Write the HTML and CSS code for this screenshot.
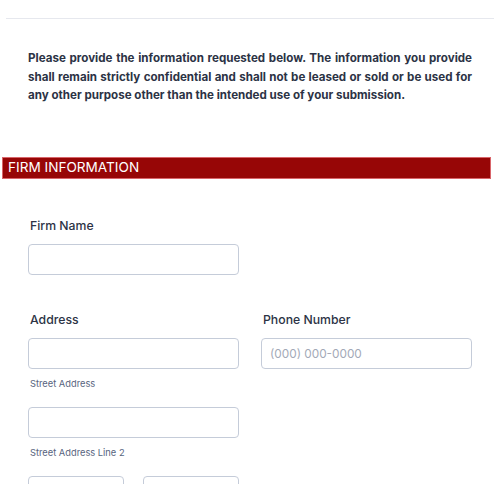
FILE: index.html
```html
<!DOCTYPE html>
<html lang="en">

<head>
    <meta charset="UTF-8">
    <meta name="viewport" content="width=device-width, initial-scale=1.0">
    <title>Firm Information</title>
    <link rel="stylesheet" href="styles.css">
</head>

<body>

    <div class="divider"></div>

    <p class="intro">Please provide the information requested below. The information you provide
        shall remain strictly confidential and shall not be leased or sold or be used for
        any other purpose other than the intended use of your submission.</p>

    <div class="section-head">FIRM INFORMATION</div>

    <div class="form-line first">
        <div class="field">
            <label class="label" for="firmName">Firm Name</label>
            <input class="input" id="firmName" type="text">
        </div>
    </div>

    <div class="form-line">
        <div class="field">
            <label class="label" for="street1">Address</label>
            <input class="input" id="street1" type="text">
            <span class="sublabel">Street Address</span>
            <input class="input" id="street2" type="text">
            <span class="sublabel">Street Address Line 2</span>
            <div class="split">
                <input class="input" type="text">
                <input class="input" type="text">
            </div>
        </div>
        <div class="field">
            <label class="label" for="phone">Phone Number</label>
            <input class="input" id="phone" type="tel" placeholder="(000) 000-0000">
        </div>
    </div>

</body>

</html>
```

FILE: styles.css
```css
body {
    margin: 0;
    font-family: Inter, "Noto Sans", sans-serif;
    color: #2c3345;
    background: #fff;
}

.divider {
    margin: 18px 6px 0;
    border-top: 1px solid #e6e8ee;
}

.intro {
    margin: 30px 28px 0;
    font-size: 11.6px;
    font-weight: 700;
    line-height: 18.5px;
    text-align: justify;
}

.section-head {
    margin: 52px 9px 0 2px;
    padding: 0 0 2px 5px;
    background-color: #970606;
    border: 1px solid #d9656a;
    color: #fff;
    font-size: 13.6px;
    line-height: 18px;
}

.form-line {
    display: flex;
    gap: 22px;
    padding: 0 28px;
    margin-top: 35px;
}

.form-line.first {
    margin-top: 37.5px;
}

.field {
    display: flex;
    flex-direction: column;
    width: 211px;
}

.label {
    font-size: 12.25px;
    font-weight: 500;
    line-height: 20px;
    padding-left: 2px;
    margin-bottom: 8px;
}

.input {
    box-sizing: border-box;
    width: 100%;
    height: 31px;
    margin: 0;
    padding: 0 8px;
    border: 1px solid #c5ccd9;
    border-radius: 4px;
    background: #fff;
    font-family: inherit;
    font-size: 11.8px;
    color: #2c3345;
}

.input::placeholder {
    color: #a3a9b7;
}

.sublabel {
    font-size: 9.3px;
    line-height: 14px;
    color: #57647e;
    padding-left: 2px;
    margin: 7.8px 0 16.2px;
}

.split {
    display: flex;
    gap: 19px;
}

.split .input {
    width: 96px;
}
```
